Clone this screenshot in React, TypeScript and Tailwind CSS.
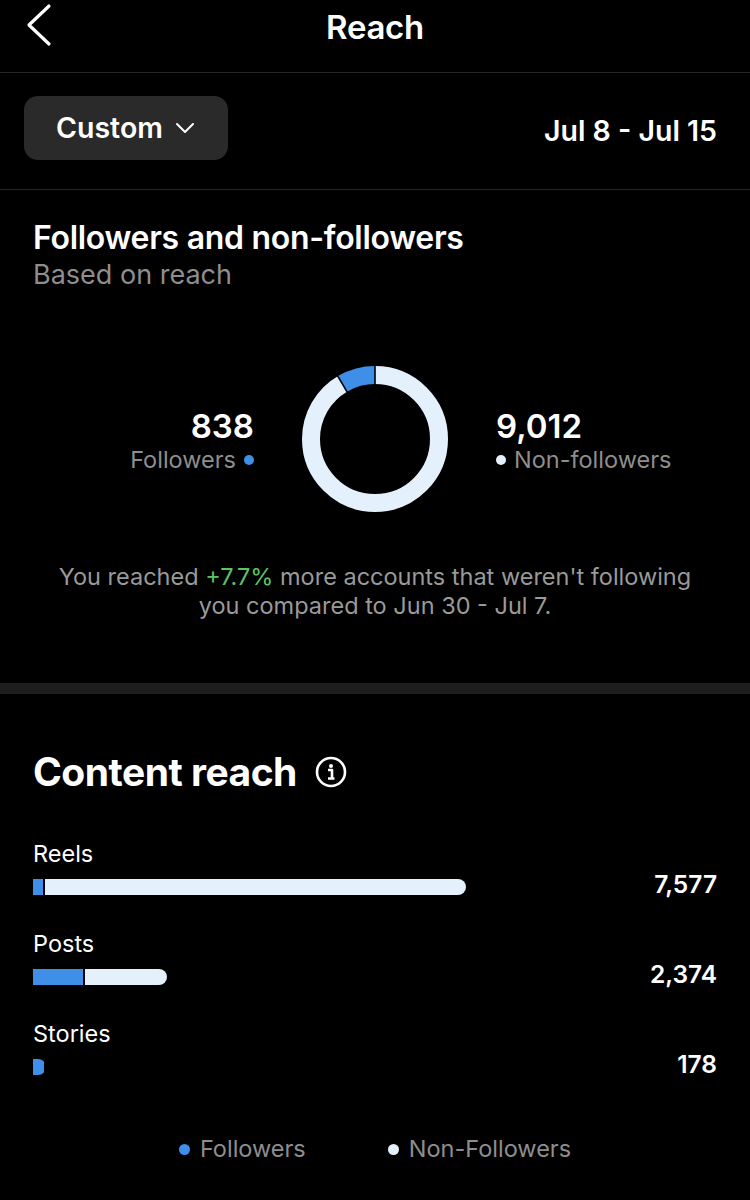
import React from "react";

const BLUE = "#3f8ee8";
const LIGHT = "#e5f0fd";

const Donut = () => {
  const r = 64;
  const c = 2 * Math.PI * r;
  const share = 838 / (838 + 9012);
  const angle = share * 360;
  const rad = ((-90 - angle) * Math.PI) / 180;
  return (
    <svg width="146" height="146" viewBox="0 0 146 146">
      <g transform="rotate(-90 73 73)">
        <circle cx="73" cy="73" r={r} fill="none" stroke={LIGHT} strokeWidth="18" strokeDasharray={`${c * (1 - share)} ${c}`} />
        <circle cx="73" cy="73" r={r} fill="none" stroke={BLUE} strokeWidth="18" strokeDasharray={`${c * share} ${c}`} strokeDashoffset={-c * (1 - share)} />
      </g>
      <line x1="73" y1="0" x2="73" y2="20" stroke="#000" strokeWidth="1.6" />
      <line
        x1={73 + 54 * Math.cos(rad)}
        y1={73 + 54 * Math.sin(rad)}
        x2={73 + 74 * Math.cos(rad)}
        y2={73 + 74 * Math.sin(rad)}
        stroke="#000"
        strokeWidth="1.6"
      />
    </svg>
  );
};

const rows = [
  { label: "Reels", value: "7,577", total: 433, blue: 10 },
  { label: "Posts", value: "2,374", total: 134, blue: 50 },
  { label: "Stories", value: "178", total: 13, blue: 12 },
];

const App = () => {
  return (
    <div className="w-[750px] h-[1200px] bg-black text-white overflow-hidden font-['Inter','Roboto',sans-serif]">
      {/* Header */}
      <div className="relative h-[73px] pb-[17px] flex items-center justify-center border-b border-[#262626]">
        <svg className="absolute left-[22px] top-[3px]" width="34" height="44" viewBox="0 0 34 44">
          <path d="M27 3 L7 22 L27 41" fill="none" stroke="#fff" strokeWidth="3.2" strokeLinecap="round" strokeLinejoin="round" />
        </svg>
        <h1 className="text-[33px] font-semibold tracking-[-0.3px]">Reach</h1>
      </div>

      {/* Range */}
      <div className="h-[117px] flex items-center justify-between pl-[24px] pr-[33px] border-b border-[#262626]">
        <div className="-mt-[6px] h-[64px] w-[204px] rounded-[14px] bg-[#2a2a2a] flex items-center pl-[32px] gap-[12px]">
          <span className="text-[28.5px] font-semibold">Custom</span>
          <svg width="20" height="12" viewBox="0 0 20 12">
            <path d="M2 2 L10 10 L18 2" fill="none" stroke="#fff" strokeWidth="2" strokeLinecap="round" strokeLinejoin="round" />
          </svg>
        </div>
        <span className="text-[28.5px] font-semibold">Jul 8 - Jul 15</span>
      </div>

      {/* Followers and non-followers */}
      <div className="pt-[29px] px-[33px]">
        <h2 className="text-[32px] leading-[38px] font-semibold tracking-[-0.3px]">Followers and non-followers</h2>
        <p className="text-[27px] leading-[34px] text-[#8e8e8e] mt-[1px]">Based on reach</p>
      </div>

      <div className="mt-[74px] flex items-center">
        <div className="flex-1 flex flex-col items-end pr-[48px] mt-[6px]">
          <span className="text-[33px] leading-[36px] font-semibold">838</span>
          <span className="text-[23.5px] leading-[32px] text-[#8e8e8e] flex items-center gap-[8px]">
            Followers
            <span className="w-[10px] h-[10px] rounded-full bg-[#3f8ee8]" />
          </span>
        </div>
        <Donut />
        <div className="flex-1 flex flex-col items-start pl-[48px] mt-[6px]">
          <span className="text-[33px] leading-[36px] font-semibold">9,012</span>
          <span className="text-[23.5px] leading-[32px] text-[#8e8e8e] flex items-center gap-[8px]">
            <span className="w-[10px] h-[10px] rounded-full bg-[#e5f0fd]" />
            Non-followers
          </span>
        </div>
      </div>

      <p className="mt-[50px] text-center text-[23.5px] leading-[29px] text-[#9a9a9a]">
        You reached <span className="text-[#5cc462]">+7.7%</span> more accounts that weren't following
        <br />
        you compared to Jun 30 - Jul 7.
      </p>

      <div className="mt-[63px] h-[11px] bg-[#1e1e1e]" />

      {/* Content reach */}
      <div className="pt-[55px] px-[33px]">
        <div className="flex items-center gap-[18px] h-[46px]">
          <h2 className="text-[39px] font-bold tracking-[-0.5px]">Content reach</h2>
          <svg width="32" height="32" viewBox="0 0 32 32">
            <circle cx="16" cy="16" r="14" fill="none" stroke="#fff" strokeWidth="2.6" />
            <circle cx="16" cy="10" r="2" fill="#fff" />
            <path d="M13 14 H17 V22 M13 22.5 H19.5" fill="none" stroke="#fff" strokeWidth="2.6" strokeLinejoin="round" />
          </svg>
        </div>

        <div className="mt-[44px] flex flex-col gap-[34px]">
          {rows.map((row) => (
            <div key={row.label}>
              <div className="text-[23.5px] leading-[30px]">{row.label}</div>
              <div className="mt-[10px] h-[16px] flex items-center justify-between">
                <div className="h-[16px] flex rounded-r-full overflow-hidden" style={{ width: row.total }}>
                  <div className="h-full bg-[#3f8ee8]" style={{ width: row.blue }} />
                  <div className="h-full w-[2px] bg-black" />
                  <div className="h-full flex-1 bg-[#e5f0fd]" />
                </div>
                <span className="text-[24.5px] leading-[30px] font-semibold -mt-[6px]">{row.value}</span>
              </div>
            </div>
          ))}
        </div>
      </div>

      {/* Legend */}
      <div className="mt-[59px] flex items-center justify-center gap-[82px] text-[23.5px] leading-[30px] text-[#8e8e8e]">
        <span className="flex items-center gap-[10px]">
          <span className="w-[11px] h-[11px] rounded-full bg-[#3f8ee8]" />
          Followers
        </span>
        <span className="flex items-center gap-[10px]">
          <span className="w-[11px] h-[11px] rounded-full bg-[#e5f0fd]" />
          Non-Followers
        </span>
      </div>
    </div>
  );
};

export default App;
